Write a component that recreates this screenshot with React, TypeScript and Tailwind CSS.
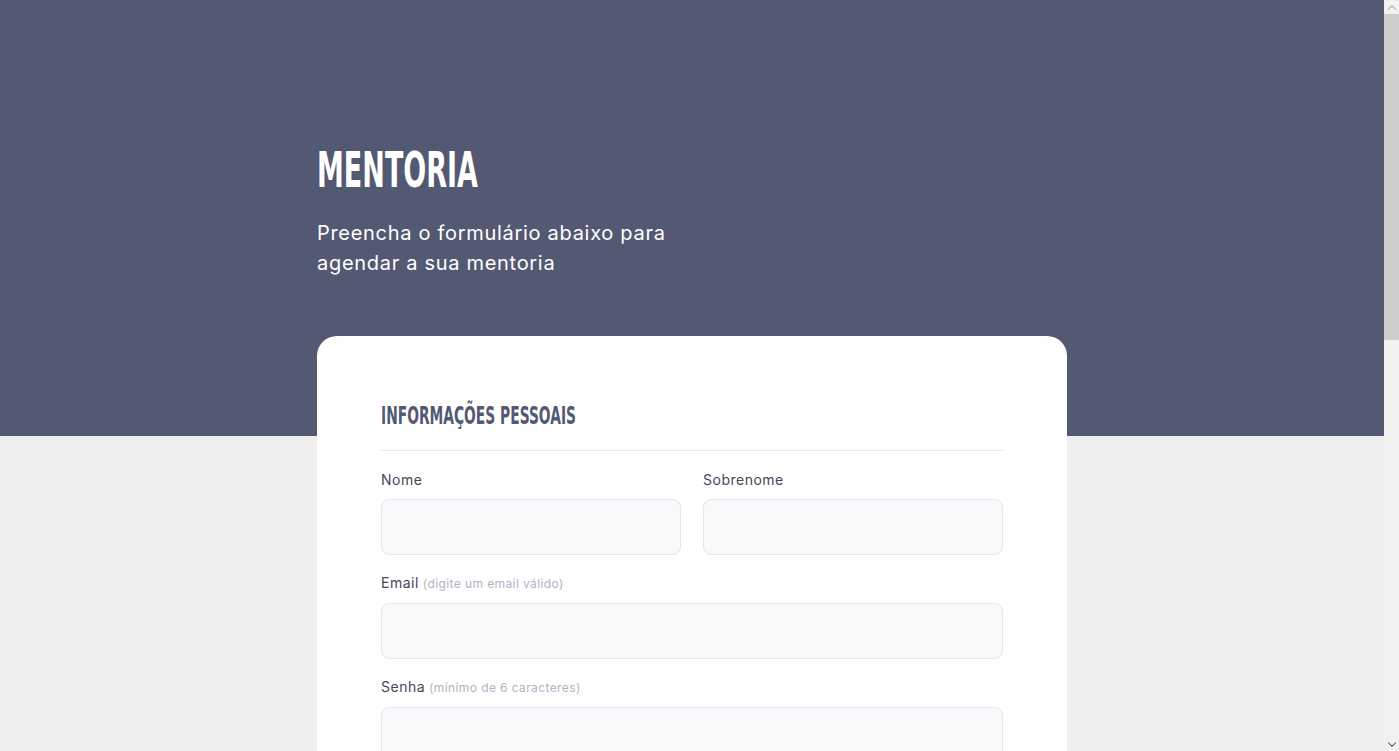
const display = { fontFamily: '"Liberation Sans Narrow", "DejaVu Sans Condensed", "Liberation Sans", sans-serif' };
const body = { fontFamily: 'Inter, "Noto Sans", "Liberation Sans", sans-serif' };

function Field({ label, hint, className = "" }: { label: string; hint?: string; className?: string }) {
  return (
    <div className={`flex flex-col ${className}`}>
      <label className="mb-[8px] text-[14px] leading-[22px] tracking-[0.5px] text-[#45475a]">
        {label}
        {hint ? <span className="ml-1 text-[12px] tracking-[0.4px] text-[#b3b2c6]">{hint}</span> : null}
      </label>
      <input className="h-[56px] w-full rounded-lg border border-[#e5e4ef] bg-[#f9f9fb] px-4 text-[14px] text-[#45475a] outline-none" />
    </div>
  );
}

function SectionTitle({ children }: { children: string }) {
  return (
    <div className="mb-[18px] border-b border-[#e5e4ef] pb-[18px]">
      <h2
        style={display}
        className="origin-left scale-x-[0.64] whitespace-nowrap text-[24px] font-bold uppercase leading-8 text-[#545973]"
      >
        {children}
      </h2>
    </div>
  );
}

function Scrollbar() {
  return (
    <aside className="fixed right-0 top-0 flex h-screen w-[15px] flex-col items-center bg-[#f1f1f1]">
      <span className="flex h-[14px] items-center">
        <svg width="8" height="5" viewBox="0 0 8 5" fill="#a3a3a3">
          <path d="M0 4 L4 0 L8 4 L8 5 L4 1.5 L0 5 Z" />
        </svg>
      </span>
      <div className="h-[326px] w-full bg-[#cdcdcd]" />
      <div className="flex-1" />
      <span className="flex h-[14px] items-center">
        <svg width="8" height="5" viewBox="0 0 8 5" fill="#505050">
          <path d="M0 1 L4 5 L8 1 L8 0 L4 3.5 L0 0 Z" />
        </svg>
      </span>
    </aside>
  );
}

export default function App() {
  return (
    <div style={body} className="min-h-[1665px] bg-[#efefef] pr-[15px]">
      <header className="h-[436px] bg-[#545973]">
        <div className="mx-auto w-[750px] pt-[140px]">
          <h1
            style={display}
            className="origin-left scale-x-[0.6] text-[50px] font-bold uppercase leading-[60px] text-white"
          >
            Mentoria
          </h1>
          <p className="mt-[18px] w-[400px] text-[20px] leading-[30px] tracking-[0.7px] text-white">
            Preencha o formulário abaixo para agendar a sua mentoria
          </p>
        </div>
      </header>

      <main className="mx-auto -mt-[100px] w-[750px] pb-20">
        <form className="rounded-[20px] bg-white px-16 pb-16 pt-16">
          <SectionTitle>Informações pessoais</SectionTitle>
          <div className="grid grid-cols-2 gap-x-[22px]">
            <Field label="Nome" />
            <Field label="Sobrenome" />
          </div>
          <Field className="mt-[17px]" label="Email" hint="(digite um email válido)" />
          <Field className="mt-[17px]" label="Senha" hint="(mínimo de 6 caracteres)" />
          <Field className="mt-[17px]" label="Confirmar senha" />

          <div className="mt-12">
            <SectionTitle>Sobre a mentoria</SectionTitle>
          </div>
          <div className="grid grid-cols-2 gap-x-[22px]">
            <Field label="Data" />
            <Field label="Horário" />
          </div>
          <Field className="mt-[17px]" label="Assunto" />
          <div className="mt-[17px] flex flex-col">
            <label className="mb-[8px] text-[14px] leading-[22px] tracking-[0.5px] text-[#45475a]">Mensagem</label>
            <textarea className="h-[140px] w-full resize-none rounded-lg border border-[#e5e4ef] bg-[#f9f9fb] px-4 py-3 text-[14px] outline-none" />
          </div>
          <button
            type="button"
            className="mt-8 h-[56px] w-full rounded-lg bg-[#545973] text-[16px] font-semibold text-white"
          >
            Agendar mentoria
          </button>
        </form>
      </main>
      <Scrollbar />
    </div>
  );
}
